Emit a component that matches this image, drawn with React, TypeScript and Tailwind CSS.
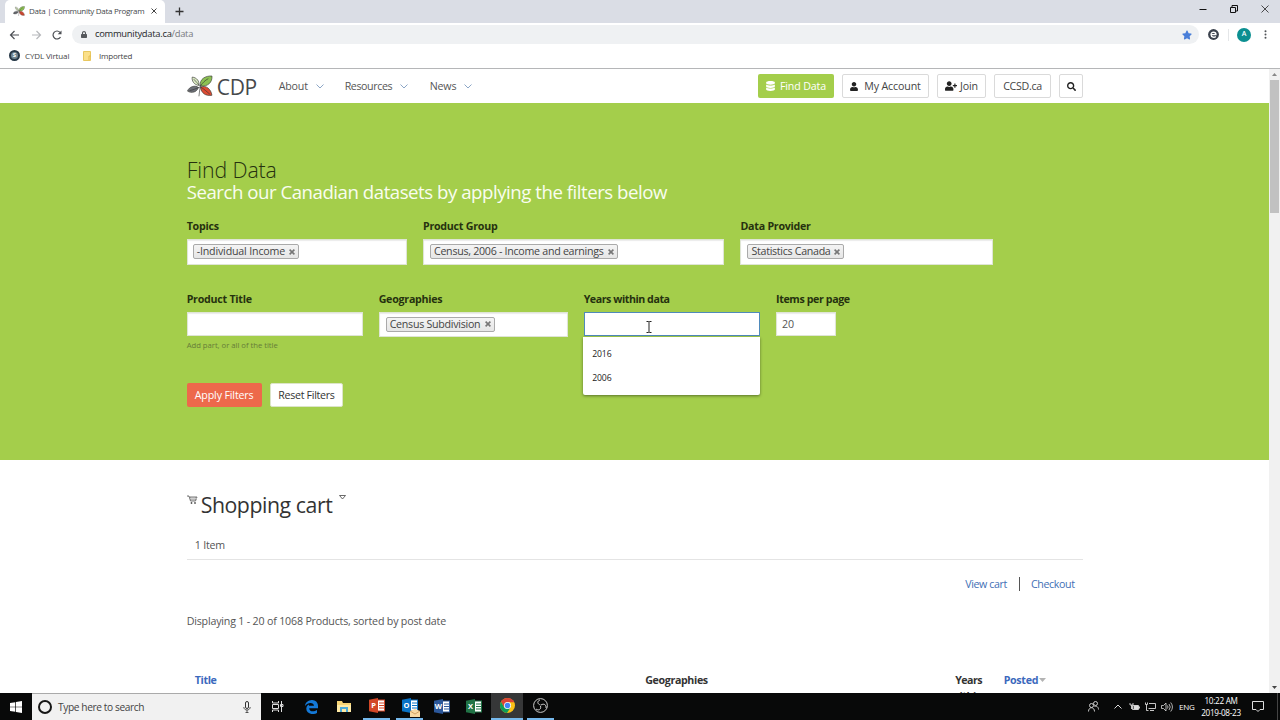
import React from 'react';
import { FaDatabase, FaUser, FaUserPlus, FaSearch, FaLock, FaStar } from 'react-icons/fa';

function Leaf({ size }: { size: number }) {
  return (
    <svg width={size} height={size * 0.84} viewBox="0 0 50 42" className="shrink-0">
      <g stroke="#3d3f3a" strokeWidth="1.3">
        <path d="M26 21 C23 8 36 1 48 2 C49 14 40 23 26 21Z" fill="#8cc152" />
        <path d="M23 20 C13 19 9 11 10 4 C19 5 24 12 23 20Z" fill="#dcebc4" />
        <path d="M22 24 C16 19 4 22 1 31 C9 36 19 33 22 24Z" fill="#6d7078" />
        <path d="M26 23 C37 19 46 27 48 39 C36 41 27 35 26 23Z" fill="#dd4b32" />
      </g>
      <path d="M23 41 C24 32 25 24 26 21 C30 15 35 10 41 7 M26 22 C21 17 17 12 13 8 M25 23 C18 26 11 29 5 30 M26 23 C33 27 39 33 44 37" fill="none" stroke="#333" strokeWidth="1.2" />
    </svg>
  );
}

function NavItem({ label, className }: { label: string; className: string }) {
  return (
    <div className={`flex items-center justify-between ${className}`}>
      <span>{label}</span>
      <svg width="8" height="5" viewBox="0 0 8 5" fill="none" stroke="#7f9cc0" strokeWidth="0.9"><path d="M.5.5 4 4 7.5.5" /></svg>
    </div>
  );
}

function Chip({ label, width, tracking }: { label: string; width: string; tracking: string }) {
  return (
    <div className={`-mt-px flex h-[15px] items-center justify-between rounded-[2px] border border-[#aaa] bg-linear-to-b from-[#f4f4f4] to-[#e6e6e6] pr-[3px] pl-[3px] ${width}`}>
      <span className={`text-[10.67px] leading-[13px] whitespace-nowrap text-[#444] ${tracking}`}>{label}</span>
      <svg width="6" height="6" viewBox="0 0 6 6" stroke="#777" strokeWidth="1.6"><path d="M.6.6 5.4 5.4M5.4.6.6 5.4" /></svg>
    </div>
  );
}

function Field({ label, width, tracking = 'tracking-[-0.25px]', children }: { label: string; width: string; tracking?: string; children: React.ReactNode }) {
  return (
    <div className={`shrink-0 ${width}`}>
      <div className={`h-5 text-[10.67px] leading-[14px] font-bold whitespace-nowrap text-[#26320f] ${tracking}`}>{label}</div>
      {children}
    </div>
  );
}

const box = 'flex items-center border border-[#dfe5d5] bg-white shadow-[inset_0_1px_1px_rgba(0,0,0,0.08)]';

function OfficeIcon({ letter, color }: { letter: string; color: string }) {
  return (
    <svg width="16" height="15" viewBox="0 0 16 15">
      <rect x="7" y="2" width="8.5" height="11" fill="#fff" stroke={color} />
      <path d="M10 5h5M10 7.5h5M10 10h5" stroke={color} />
      <path d="M0 1.7 9 0v15L0 13.3Z" fill={color} />
      <text x="4.5" y="10.3" textAnchor="middle" fontSize="7.5" fontWeight="bold" fill="#fff">{letter}</text>
    </svg>
  );
}

function Browser() {
  return (
    <>
      <div className="flex h-[23px] shrink-0 items-start bg-[#dadde5]">
        <div className="ml-[5px] flex h-[23px] w-[160px] items-center rounded-t-[5px] bg-white pb-px pl-2">
          <Leaf size={12} />
          <span className="ml-1 w-[116px] text-[8px] tracking-[-0.28px] whitespace-nowrap text-[#45484c]">Data | Community Data Program</span>
          <svg className="ml-[6px]" width="6" height="6" viewBox="0 0 6 6" stroke="#444"><path d="M.5.5l5 5M5.5.5l-5 5" /></svg>
        </div>
        <svg className="mt-[7px] ml-[10px]" width="9" height="9" viewBox="0 0 9 9" stroke="#333" strokeWidth="1.3"><path d="M4.5.5v8M.5 4.5h8" /></svg>
        <div className="mt-[5px] ml-auto flex items-center gap-[23px] pr-[11px]">
          <svg width="8" height="8" viewBox="0 0 8 8" stroke="#111"><path d="M.5 4.5h7" /></svg>
          <svg width="8" height="8" viewBox="0 0 8 8" stroke="#111" fill="none"><path d="M.5 2.5h5v5h-5zM2 2V.5h5.5V6H6" /></svg>
          <svg width="8" height="8" viewBox="0 0 8 8" stroke="#222" strokeWidth=".8"><path d="M.5.5l7 7M7.5.5l-7 7" /></svg>
        </div>
      </div>
      <div className="flex h-[23px] shrink-0 items-center bg-white pl-[9px]">
        <svg width="54" height="12" viewBox="0 0 54 12" fill="none" strokeWidth="1.2">
          <path d="M10 6H1.5M5.5 2l-4 4 4 4" stroke="#4c4f54" />
          <path d="M23 6h8.5M27.5 2l4 4-4 4" stroke="#b6b8bb" />
          <path d="M51.5 8A4 4 0 1 1 51 3.300" stroke="#4c4f54" />
          <path d="M52.500 1.500v3.800h-3.800z" fill="#4c4f54" />
        </svg>
        <div className="ml-[9px] flex h-[19px] w-[1127px] items-center rounded-full bg-[#eff1f3] pl-[9px]">
          <FaLock className="h-[7px] w-[6px] text-[#55585c]" />
          <span className="ml-2 text-[9.4px] tracking-[-0.28px] text-[#25272a]">communitydata.ca<span className="text-[#777a7e]">/data</span></span>
          <FaStar className="mr-[7px] ml-auto h-[10px] w-[10px] text-[#4a7fd9]" />
        </div>
        <svg className="ml-[9px]" width="11" height="11" viewBox="0 0 11 11" fill="none"><circle cx="5.500" cy="5.500" r="5.400" fill="#3b424d" /><path d="M3 5.700h5C8 2.500 3 2.400 3 5.600 3 8.500 6.500 8.700 7.800 7.500" stroke="#fff" strokeWidth="1.300" /></svg>
        <div className="ml-[9px] h-[12px] w-px bg-[#e4e6e8]" />
        <div className="ml-[8px] flex h-[14px] w-[14px] items-center justify-center rounded-full bg-[#0b8f91] text-[7px] font-semibold text-white">A</div>
        <svg className="ml-[13px]" width="3" height="9" fill="#505357"><circle cx="1.500" cy="1.200" r="1" /><circle cx="1.500" cy="4.500" r="1" /><circle cx="1.500" cy="7.800" r="1" /></svg>
      </div>
      <div className="flex h-[23px] shrink-0 items-center border-b border-[#b5b6b8] bg-white pb-[3px] pl-[9px] text-[8px] text-[#444]">
        <div className="flex h-[11px] w-[11px] items-center justify-center rounded-full border-2 border-[#253746] bg-[#718793] text-[6px] font-bold text-white">S</div>
        <span className="ml-[5px] w-[58px] tracking-[-0.13px] whitespace-nowrap">CYDL Virtual</span>
        <svg width="8" height="10" viewBox="0 0 8 10"><path d="M.5.500h7v9h-7z" fill="#fbe08a" stroke="#e8c75f" /><path d="M6 9V5h2" fill="none" stroke="#e4bd50" /></svg>
        <span className="ml-[8px] tracking-[-0.2px]">Imported</span>
      </div>
    </>
  );
}

function Header() {
  const button = 'flex h-[24px] items-center justify-center rounded-[2px] border border-[#dadada] text-[#444]';
  return (
    <header className="flex h-[34px] shrink-0 items-center pl-[186.67px] text-[10.67px] tracking-[-0.15px] text-[#555]">
      <Leaf size={26} />
      <span className="mt-px ml-[4px] w-[42px] text-[21px] leading-[24px] font-medium tracking-[-0.25px] text-[#46494b]">CDP</span>
      <NavItem label="About" className="ml-[20px] w-[45px]" />
      <NavItem label="Resources" className="ml-[21px] w-[63px] tracking-[-0.4px]" />
      <NavItem label="News" className="ml-[22px] w-[42px]" />
      <div className="ml-auto flex w-[511px]">
        <div className="flex h-[24px] w-[76px] items-center justify-center gap-[5px] rounded-[2px] bg-[#a4ce4b] text-white"><FaDatabase className="h-[10px] w-[9px]" />Find Data</div>
        <div className={`${button} ml-2 w-[87px] gap-[6px]`}><FaUser className="h-[9px] w-[8px] text-[#222]" />My Account</div>
        <div className={`${button} ml-2 w-[49px] gap-[3px]`}><FaUserPlus className="h-[10px] w-[12px] text-[#222]" />Join</div>
        <div className={`${button} ml-2 w-[57px] tracking-[-0.3px]`}>CCSD.ca</div>
        <div className={`${button} ml-2 w-[24px]`}><FaSearch className="h-[9px] w-[9px] text-[#222]" /></div>
      </div>
    </header>
  );
}

function Filters() {
  return (
    <section className="h-[357px] shrink-0 bg-[#a4ce4b] pt-[55px] pl-[186.67px]">
      <h1 className="h-[23px] text-[21.3px] leading-[23px] font-light tracking-[-0.1px] text-[#26320f]">Find Data</h1>
      <p className="h-[38px] text-[18.67px] leading-[22px] tracking-[-0.48px] whitespace-nowrap text-[#f9fdf0]">Search our Canadian datasets by applying the filters below</p>
      <div className="flex h-[73px] gap-[16px]">
        <Field label="Topics" width="w-[220.33px]"><div className={`${box} h-[26px] pl-[5px]`}><Chip label="-Individual Income" width="w-[106px]" tracking="tracking-[-0.17px]" /></div></Field>
        <Field label="Product Group" width="w-[301.5px]"><div className={`${box} h-[26px] pl-[6px]`}><Chip label="Census, 2006 - Income and earnings" width="w-[188px]" tracking="tracking-[-0.28px]" /></div></Field>
        <Field label="Data Provider" width="w-[253px]"><div className={`${box} h-[26px] pl-[6px]`}><Chip label="Statistics Canada" width="w-[97px]" tracking="tracking-[-0.3px]" /></div></Field>
      </div>
      <div className="flex h-[91px] gap-[16px]">
        <Field label="Product Title" width="w-[176px]">
          <div className={`${box} h-[24px]`} />
          <div className="mt-[4px] text-[7.7px] leading-[11px] tracking-[-0.02px] text-[#667d38]">Add part, or all of the title</div>
        </Field>
        <Field label="Geographies" width="w-[189px]"><div className={`${box} h-[25px] pl-[6px]`}><Chip label="Census Subdivision" width="w-[109px]" tracking="tracking-[-0.27px]" /></div></Field>
        <Field label="Years within data" width="w-[176.33px]" tracking="tracking-[-0.45px]">
          <div className="relative flex h-[24px] items-center border border-[#4f8abb] bg-white pl-[60px]">
            <svg width="8" height="12" viewBox="0 0 8 12" fill="none" stroke="#222" className="mt-[6px] shrink-0"><path d="M1.500.500h2L4 1l.5-.500h2M4 1v10M1.500 11.500h2L4 11l.5.500h2" /></svg>
            <div className="absolute top-[24px] -left-[1.5px] h-[58px] w-[177px] rounded-b-[2px] bg-white pt-[5px] pl-[9px] text-[8.67px] leading-[24px] tracking-[-0.1px] text-[#222] shadow-[0_1px_3px_rgba(0,0,0,0.45)]">
              <div>2016</div><div>2006</div>
            </div>
          </div>
        </Field>
        <Field label="Items per page" width="w-[60.5px]" tracking="tracking-[-0.38px]"><div className={`${box} h-[24px] pl-[5px] text-[10.67px] text-[#555]`}>20</div></Field>
      </div>
      <div className="flex gap-2 text-[10.67px] tracking-[-0.15px]">
        <div className="flex h-[24px] w-[75px] items-center justify-center rounded-[2px] bg-[#ed694b] text-white">Apply Filters</div>
        <div className="flex h-[24px] w-[73.5px] items-center justify-center rounded-[2px] border border-[#dce5c8] bg-white tracking-[-0.3px] text-[#333]">Reset Filters</div>
      </div>
    </section>
  );
}

function Results() {
  return (
    <section className="pt-[31px] pl-[186.67px] text-[10.67px] leading-[16px] tracking-[-0.19px] text-[#555]">
      <div className="flex h-[46px]">
        <svg className="mt-[4px]" width="11" height="9" viewBox="0 0 11 9"><path d="M0 1h2l1.500 5h5L10 2H3" fill="#aaa" stroke="#777" /><path d="M3 3.500h7M5 2v4M7 2v4" stroke="#ddd" strokeWidth=".6" /><circle cx="4.500" cy="8" r=".9" fill="#555" /><circle cx="8" cy="8" r=".9" fill="#555" /></svg>
        <h2 className="ml-[3px] w-[136px] text-[21.3px] leading-[28px] tracking-[-0.45px] whitespace-nowrap text-[#333]">Shopping cart</h2>
        <svg className="mt-[4px] ml-[2px]" width="7" height="5" viewBox="0 0 7 5" fill="#fff" stroke="#444" strokeWidth=".8"><path d="M.5.500h6L3.500 4Z" /></svg>
      </div>
      <div className="h-[23px] w-[896px] border-b border-[#e4e4e4] pl-2 leading-[17px]">1 Item</div>
      <div className="mt-[16px] flex h-[15px] w-[888px] items-center justify-end tracking-[-0.38px] text-[#426fb5]"><span>View cart</span><span className="mr-[11px] ml-[12px] h-[14px] w-px bg-[#555]" /><span>Checkout</span></div>
      <div className="mt-[22px] whitespace-nowrap">Displaying 1 - 20 of 1068 Products, sorted by post date</div>
      <div className="mt-[43px] flex pl-2 leading-[16px] font-bold tracking-[-0.35px] text-[#333]">
        <div className="w-[450.5px] text-[#3b69bd]">Title</div>
        <div className="w-[280px]">Geographies</div>
        <div className="w-[57px] text-right tracking-[-0.5px]">Years within</div>
        <div className="ml-[21.5px] flex h-[16px] items-center tracking-[-0.3px] text-[#3b69bd]">Posted<svg width="7" height="4" className="ml-px"><path d="M0 0h7L3.500 4Z" fill="#b3b3b3" /></svg></div>
      </div>
    </section>
  );
}

function Taskbar() {
  const slot = 'flex h-[27px] w-[27px] shrink-0 items-center justify-center';
  return (
    <footer className="flex h-[27px] shrink-0 items-center bg-[#080909] text-white">
      <svg className="mx-[10px]" width="12" height="12" viewBox="0 0 12 12" fill="#fff"><path d="M0 2 5.300 1.200v4.500H0zM6 1l6-1v5.700H6zM0 6.300h5.300v4.500L0 10zM6 6.300h6V12l-6-1z" /></svg>
      <div className="flex h-[27px] w-[229px] items-center border-t border-[#aaa] bg-[#f1f1f1] pl-[6px]">
        <div className="h-[14px] w-[14px] rounded-full border-2 border-[#161616]" />
        <span className="mt-px ml-[6px] text-[10.2px] tracking-[-0.4px] text-[#444]">Type here to search</span>
        <svg className="mr-[10px] ml-auto" width="8" height="12" viewBox="0 0 8 12" fill="none" stroke="#333"><rect x="2.500" y=".5" width="3" height="7" rx="1.500" /><path d="M.8 6c0 4 6.400 4 6.400 0M4 9v2.500M2.500 11.500h3" strokeWidth=".8" /></svg>
      </div>
      <div className={`${slot} ml-[3px]`}><svg width="12" height="11" viewBox="0 0 12 11" fill="none" stroke="#ddd"><path d="M.5 0v2h6V0M.5 3.500h6v4h-6zM.5 11V9h6v2M9.500 0v11M8.500 3.500h2.500v2H8.500z" /></svg></div>
      <div className={`${slot} ml-[7px]`}><svg width="13" height="14" viewBox="0 0 13 14"><path d="M0 6C.5-1.500 13-2.500 13 6v2.200H4.200C4.500 12 9 12 12 10v3C7 15.500 1 13.500 1.300 8.500 1.500 6 3 4.800 5 4 3 5 4.300 5.800 4.300 5.800H9C9 2.300 3 1.500 0 6Z" fill="#1479d7" /></svg></div>
      <div className={`${slot} ml-[5px]`}><svg width="14" height="13" viewBox="0 0 14 13"><path d="M0 1h5l1 2h8v9H0z" fill="#f6d476" /><path d="M0 5h14v7H0z" fill="#ffeaa5" /><path d="M3 12V7h8v5H9V9H5v3z" fill="#4dabd9" /></svg></div>
      <div className={`${slot} ml-[6px] border-b-2 border-[#76b9ed]`}><OfficeIcon letter="P" color="#d24726" /></div>
      <div className={`${slot} relative ml-[6px] border-b-2 border-[#76b9ed]`}>
        <OfficeIcon letter="O" color="#0872c6" />
        <svg className="absolute right-[3px] bottom-px" width="10" height="8" viewBox="0 0 10 8"><path d="M0 2 5 0l5 2v6H0Z" fill="#f8d9a2" /><path d="m0 2 5 3 5-3" fill="none" stroke="#c28d4a" strokeWidth=".7" /></svg>
      </div>
      <div className={`${slot} ml-[5px]`}><OfficeIcon letter="W" color="#2b579a" /></div>
      <div className={`${slot} ml-[5px]`}><OfficeIcon letter="X" color="#217346" /></div>
      <div className="ml-[4px] flex h-[27px] w-[32px] items-center justify-center border-b-2 border-[#76b9ed] bg-[#363738]">
        <svg width="15" height="15" viewBox="0 0 30 30"><circle cx="15" cy="15" r="15" fill="#fbc116" /><path d="M2 7.500A15 15 0 0 1 28.500 8.500H15L8.500 19Z" fill="#db4437" /><path d="M2 7.500A15 15 0 0 0 14 30l7-11-12.500 0Z" fill="#0f9d58" /><circle cx="15" cy="15" r="7" fill="#fff" /><circle cx="15" cy="15" r="5.500" fill="#4285f4" /></svg>
      </div>
      <div className={`${slot} ml-[4px] border-b-2 border-[#76b9ed]`}><svg width="15" height="15" viewBox="0 0 15 15" fill="none" stroke="#ccc"><circle cx="7.500" cy="7.500" r="6.900" /><path d="M7.500 7C4 6 4 3 7 2M8 7c3-2 5.500 0 5 3M7.500 8c1 3.500-2 5-4.500 3" /></svg></div>
      <div className="ml-auto flex items-center">
        <svg width="11" height="11" viewBox="0 0 11 11" fill="none" stroke="#ddd" strokeWidth=".9"><circle cx="3.500" cy="4.500" r="2" /><path d="M.5 10.500c0-5 6-5 6 0" /><circle cx="7.500" cy="2.500" r="2" /><path d="M6.500 5.500c2-1 4 .5 4 3" /></svg>
        <svg className="ml-[15px]" width="8" height="5" viewBox="0 0 8 5" fill="none" stroke="#ddd"><path d="M.5 4.500 4 1l3.500 3.500" /></svg>
        <svg className="ml-[7px]" width="11" height="8" viewBox="0 0 11 8" fill="none" stroke="#ddd" strokeWidth=".9"><path d="M3.500 2.500h6v4h-6zM10.500 3.500v2M1 0v2h3V0M2.500 2v4" /><path d="M5 3h4v3H5z" fill="#ddd" /></svg>
        <svg className="ml-[5px]" width="11" height="9" viewBox="0 0 11 9" fill="none" stroke="#ddd" strokeWidth=".9"><path d="M4 1.500h6.500v5H3.500M5 8.500h4M.5.500v2h2v-2M1.500 2.500v6h2" /></svg>
        <svg className="ml-[5px]" width="12" height="10" viewBox="0 0 12 10" fill="none" stroke="#ddd" strokeWidth=".8"><path d="M.5 3.500h2L5 1v8L2.500 6.500h-2zM6.500 3.500q1 1.500 0 3M8 2q2.500 3 0 6M9.700.500q3.500 4.500 0 9" /></svg>
        <span className="ml-[6px] w-[16px] text-[8px] tracking-[-0.2px]">ENG</span>
        <div className="ml-[5px] w-[42px] text-center text-[8.2px] leading-[12px] tracking-[-0.3px] whitespace-nowrap">10:22 AM<br />2019-08-23</div>
        <svg className="mr-[13px] ml-[10px]" width="12" height="11" viewBox="0 0 12 11" fill="none" stroke="#ddd"><path d="M.5.500h11v8H8L6 10.500 4 8.500H.5z" /></svg>
        <div className="mr-[2px] h-[27px] w-px bg-[#444]" />
      </div>
    </footer>
  );
}

export default function App() {
  return (
    <div className="flex h-[720px] w-[1280px] flex-col overflow-hidden bg-white font-['Open_Sans','Noto_Sans',sans-serif]">
      <Browser />
      <div className="flex h-[624px] shrink-0 overflow-hidden">
        <main className="flex w-[1269px] shrink-0 flex-col"><Header /><Filters /><Results /></main>
        <div className="flex w-[11px] shrink-0 flex-col items-center bg-[#f1f1f1] pt-[4px]">
          <svg width="5" height="3"><path d="M0 3 2.500 0 5 3Z" fill="#888" /></svg>
          <div className="mt-[4px] h-[133px] w-[9px] bg-[#c1c1c1]" />
          <svg className="mt-auto mb-[4px]" width="5" height="3"><path d="M0 0h5L2.500 3Z" fill="#444" /></svg>
        </div>
      </div>
      <Taskbar />
    </div>
  );
}
